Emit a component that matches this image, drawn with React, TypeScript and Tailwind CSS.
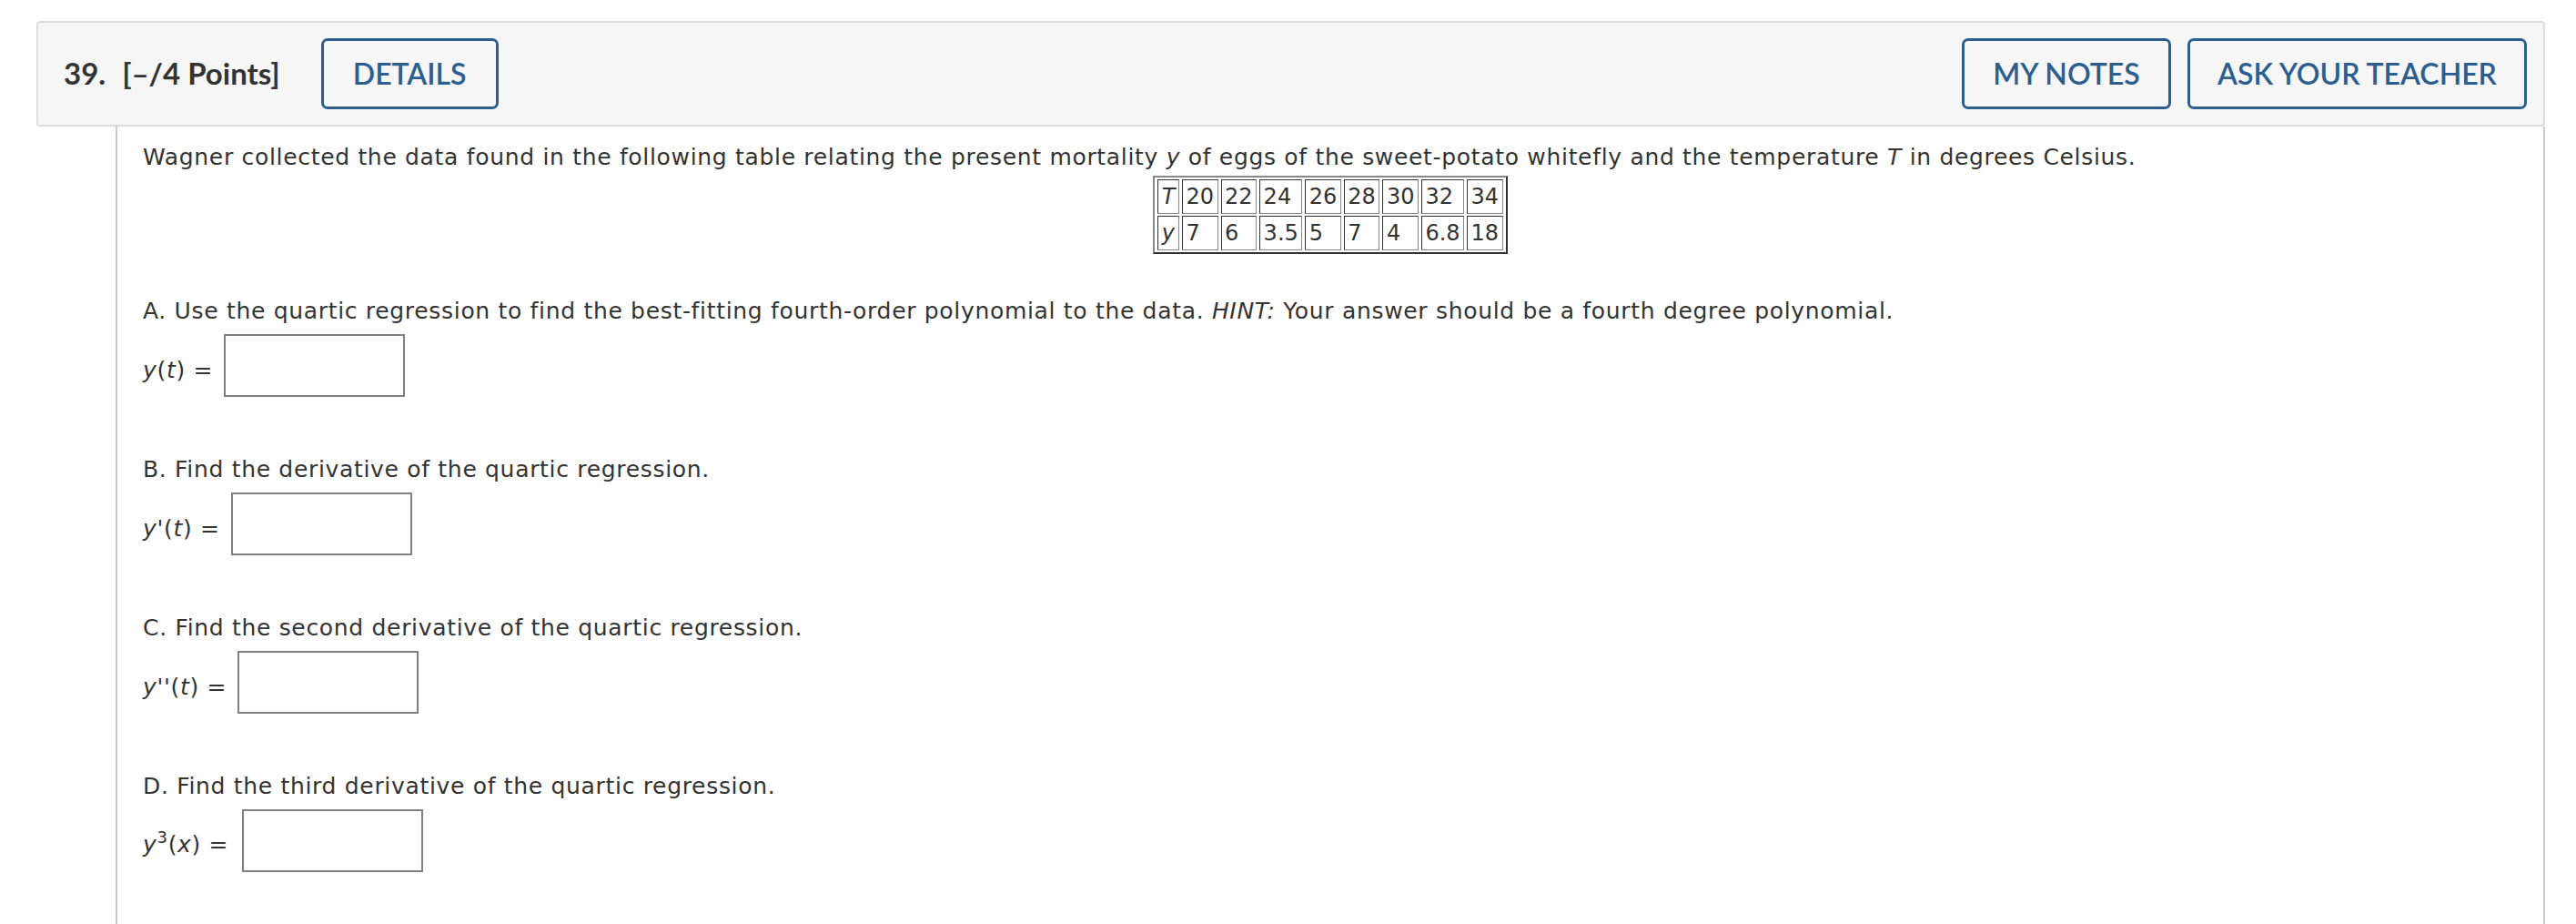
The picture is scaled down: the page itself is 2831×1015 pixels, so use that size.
import type { ReactNode } from "react";

const tRow = ["20", "22", "24", "26", "28", "30", "32", "34"];
const yRow = ["7", "6", "3.5", "5", "7", "4", "6.8", "18"];

function Cell({ children }: { children: ReactNode }) {
  return (
    <td className="border border-t-[#333] border-l-[#333] border-r-[#888] border-b-[#888] px-[3.5px] py-[4px] text-left leading-[28px]">
      {children}
    </td>
  );
}

function Answer({ label, gap = "ml-[12px]" }: { label: ReactNode; gap?: string }) {
  return (
    <div className="mt-[7px] flex items-center">
      <span className="pt-[10px]">{label} =</span>
      <input
        type="text"
        className={`${gap} h-[69px] w-[199px] border-2 border-[#808080] bg-white outline-none`}
      />
    </div>
  );
}

function OutlineButton({ label, width }: { label: string; width: string }) {
  return (
    <button
      type="button"
      className={`h-[78px] rounded-[7px] border-[3px] border-[#2c5f8f] text-[32px] font-semibold text-[#2c5f8f] ${width}`}
    >
      {label}
    </button>
  );
}

export default function App() {
  return (
    <div className="min-h-screen bg-white pl-[40px] pr-[34px] pt-[23px] text-[#333]">
      <div className="flex h-[116px] items-center rounded-[4px] border-2 border-[#dddddd] bg-[#f6f6f6] pl-[28px] pr-[18px] font-['Lato',sans-serif]">
        <span className="text-[33px] font-bold text-[#333]">39.</span>
        <span className="ml-[18px] text-[33px] font-bold text-[#333]">[–/4 Points]</span>
        <div className="ml-[45px]">
          <OutlineButton label="DETAILS" width="w-[195px]" />
        </div>
        <div className="ml-auto flex gap-[18px]">
          <OutlineButton label="MY NOTES" width="w-[230px]" />
          <OutlineButton label="ASK YOUR TEACHER" width="w-[373px]" />
        </div>
      </div>

      <div className="ml-[87px] h-[876px] border-x-2 border-[#cccccc] px-[28px] pt-[16px] font-['DejaVu_Sans',Verdana,sans-serif] text-[25px] leading-[36px] tracking-[0.68px]">
        <p>
          Wagner collected the data found in the following table relating the present mortality <i>y</i> of eggs of the
          sweet-potato whitefly and the temperature <i>T</i> in degrees Celsius.
        </p>
        <table className="mx-auto mt-[2px] border-separate border-spacing-x-[3px] border-spacing-y-[2px] border-2 border-t-[#888] border-l-[#888] border-r-[#333] border-b-[#333] text-[24px] tracking-normal">
          <tbody>
            <tr>
              <Cell>
                <i>T</i>
              </Cell>
              {tRow.map((v, i) => (
                <Cell key={i}>{v}</Cell>
              ))}
            </tr>
            <tr>
              <Cell>
                <i>y</i>
              </Cell>
              {yRow.map((v, i) => (
                <Cell key={i}>{v}</Cell>
              ))}
            </tr>
          </tbody>
        </table>

        <p className="mt-[45px]">
          A. Use the quartic regression to find the best-fitting fourth-order polynomial to the data. <i>HINT:</i> Your
          answer should be a fourth degree polynomial.
        </p>
        <Answer
          label={
            <>
              <i>y</i>(<i>t</i>)
            </>
          }
        />

        <p className="mt-[62px]">B. Find the derivative of the quartic regression.</p>
        <Answer
          label={
            <>
              <i>y</i>'(<i>t</i>)
            </>
          }
        />

        <p className="mt-[62px]">C. Find the second derivative of the quartic regression.</p>
        <Answer
          label={
            <>
              <i>y</i>''(<i>t</i>)
            </>
          }
        />

        <p className="mt-[62px]">D. Find the third derivative of the quartic regression.</p>
        <Answer
          gap="ml-[15px]"
          label={
            <>
              <i>y</i>
              <span className="relative -top-[10px] text-[18px]">3</span>(<i>x</i>)
            </>
          }
        />
      </div>
    </div>
  );
}
